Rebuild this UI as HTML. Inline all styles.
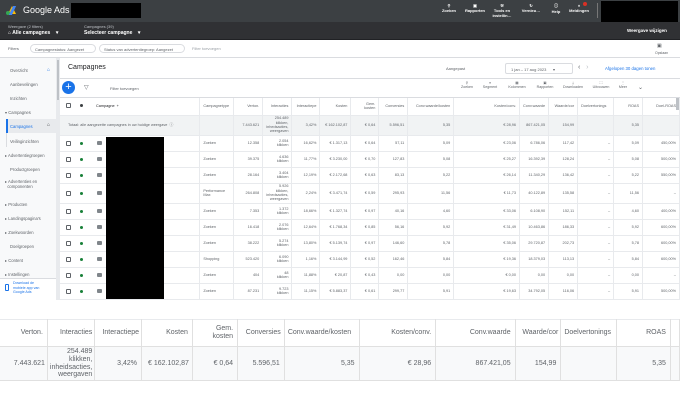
<!DOCTYPE html>
<html><head><meta charset="utf-8"><style>
*{margin:0;padding:0;box-sizing:border-box}
body{width:680px;height:409px;overflow:hidden;background:#fff;font-family:"Liberation Sans",sans-serif;color:#3c4043;position:relative}
.a{position:absolute}
.top{left:0;top:0;width:680px;height:22px;background:#3c4043}
.bar2{left:0;top:22px;width:680px;height:18px;background:#303134;border-bottom:1px solid #202124}
.w{color:#fff}
.ic{font-size:4px;color:#fff;text-align:center;font-weight:bold}
.side{left:0;top:58px;width:56px;height:242px;background:#f8f9fa}
.si{position:absolute;left:10px;font-size:4.2px;color:#5f6368}
table.m{position:absolute;left:60px;top:98px;border-collapse:collapse;table-layout:fixed;font-size:3.8px;color:#5f6368}
table.m td{border-right:1px solid #e8eaed;border-bottom:1px solid #e8eaed;text-align:right;padding:0 3px;line-height:4.3px;overflow:hidden;white-space:nowrap}
table.m td.l{text-align:left}
table.m tr{height:16px}
table.b{position:absolute;left:0;top:319px;border-collapse:collapse;table-layout:fixed;font-size:7px;color:#5f6368}
table.b td{border-right:1px solid #e0e0e0;border-bottom:1px solid #e0e0e0;border-top:1px solid #e8eaed;text-align:right;padding:0 4px;line-height:7.6px;white-space:nowrap;overflow:hidden}
.cb{position:absolute;width:5px;height:5px;border:1px solid #5f6368;border-radius:1px}
.dot{position:absolute;width:3px;height:3px;border-radius:50%;background:#188038}
.cic{position:absolute;width:5px;height:4px;background:#80868b;border-radius:1px}
</style></head><body>
<div class="a top"></div>
<div class="a" style="left:8px;top:6px;width:0;height:0;border-left:4px solid transparent;border-right:4px solid transparent;border-bottom:8px solid #fbbc04"></div>
<div class="a" style="left:6px;top:11px;width:4px;height:4px;border-radius:50%;background:#34a853"></div>
<div class="a" style="left:11px;top:6px;width:3px;height:9px;background:#4285f4;transform:skewX(-25deg)"></div>
<div class="a w" style="left:23px;top:5px;font-size:9px">Google Ads</div>
<div class="a" style="left:71px;top:3px;width:70px;height:15px;background:#000"></div>
<div class="a ic" style="left:437px;top:3px;width:24px">&#9906;<br>Zoeken</div>
<div class="a ic" style="left:461px;top:3px;width:28px">&#9635;<br>Rapporten</div>
<div class="a ic" style="left:490px;top:3px;width:24px">&#9874;<br>Tools en<br>instellin…</div>
<div class="a ic" style="left:518px;top:3px;width:26px">&#8635;<br>Vernieu…</div>
<div class="a ic" style="left:546px;top:3px;width:20px">&#9432;<br>Help</div>
<div class="a ic" style="left:566px;top:3px;width:26px">&#9830;<br>Meldingen</div>
<div class="a" style="left:583px;top:2px;width:4px;height:4px;border-radius:50%;background:#d93025"></div>
<div class="a" style="left:597px;top:3px;width:1px;height:15px;background:#777"></div>
<div class="a" style="left:601px;top:1px;width:77px;height:21px;background:#000"></div>
<div class="a bar2"></div>
<div class="a" style="left:8px;top:24px;font-size:4px;color:#bdc1c6">Weergave (2 filters)</div>
<div class="a w" style="left:8px;top:30px;font-size:5px;font-weight:bold">&#8962; Alle campagnes &nbsp;&nbsp; ▾</div>
<div class="a" style="left:84px;top:24px;font-size:4px;color:#bdc1c6">Campagnes (39)</div>
<div class="a w" style="left:84px;top:30px;font-size:5px;font-weight:bold">Selecteer campagne &nbsp;&nbsp; ▾</div>
<div class="a w" style="left:627px;top:28px;font-size:4.5px;font-weight:bold">Weergave wijzigen</div>
<div class="a" style="left:0;top:40px;width:680px;height:18px;border-bottom:1px solid #dadce0"></div>
<div class="a" style="left:8px;top:46px;font-size:4px;color:#5f6368">Filters</div>
<div class="a" style="left:30px;top:44px;width:66px;height:9px;border:1px solid #dadce0;border-radius:5px;font-size:4px;padding:2px 4px;color:#5f6368">Campagnestatus: Aangezet</div>
<div class="a" style="left:99px;top:44px;width:86px;height:9px;border:1px solid #dadce0;border-radius:5px;font-size:4px;padding:2px 4px;color:#5f6368">Status van advertentiegroep: Aangezet</div>
<div class="a" style="left:192px;top:46px;font-size:4px;color:#9aa0a6">Filter toevoegen</div>
<div class="a" style="left:657px;top:43px;font-size:5px;color:#5f6368">&#9635;</div>
<div class="a" style="left:655px;top:51px;font-size:3.5px;color:#5f6368">Opslaan</div>
<div class="a side"></div>
<div class="a" style="left:56px;top:58px;width:4px;height:242px;background:#e8eaed"></div>
<div class="a" style="left:57px;top:60px;width:2px;height:40px;background:#bdc1c6"></div>
<div class="si" style="top:68px">Overzicht</div><div class="a" style="left:47px;top:67px;font-size:5px;color:#1a73e8">&#8962;</div>
<div class="si" style="top:82px">Aanbevelingen</div>
<div class="si" style="top:96px">Inzichten</div>
<div class="si" style="top:110px;left:5px">▾ Campagnes</div>
<div class="a" style="left:6px;top:119px;width:50px;height:14px;background:#e8eaed"></div>
<div class="a" style="left:6px;top:119px;width:2px;height:14px;background:#1a73e8"></div>
<div class="si" style="top:124px;color:#1a73e8">Campagnes</div><div class="a" style="left:47px;top:122px;font-size:5px">&#8962;</div>
<div class="a" style="left:6px;top:133px;width:1px;height:14px;background:#dadce0"></div>
<div class="si" style="top:139px">Veilinginzichten</div>
<div class="si" style="top:153px;left:5px">▸ Advertentiegroepen</div>
<div class="si" style="top:167px">Productgroepen</div>
<div class="si" style="top:179px;left:5px;line-height:5px">▸ Advertenties en<br>&nbsp;&nbsp;componenten</div>
<div class="si" style="top:202px;left:5px">▸ Producten</div>
<div class="si" style="top:216px;left:5px">▸ Landingspagina's</div>
<div class="si" style="top:230px;left:5px">▸ Zoekwoorden</div>
<div class="si" style="top:244px">Doelgroepen</div>
<div class="si" style="top:258px;left:5px">▸ Content</div>
<div class="si" style="top:272px;left:5px">▸ Instellingen</div>
<div class="a" style="left:0;top:278px;width:56px;height:22px;background:#fff;border-top:1px solid #dadce0"></div>
<div class="a" style="left:5px;top:284px;width:4px;height:7px;border:1px solid #1a73e8;border-radius:1px"></div>
<div class="a" style="left:13px;top:281px;font-size:3.6px;color:#1a73e8;line-height:4.5px">Download de<br>mobiele app van<br>Google Ads</div>
<div class="a" style="left:68px;top:64px;font-size:7px;color:#202124">Campagnes</div>
<div class="a" style="left:60px;top:78px;width:620px;height:1px;background:#dadce0"></div>
<div class="a" style="left:446px;top:66px;font-size:4px;color:#5f6368">Aangepast</div>
<div class="a" style="left:505px;top:63px;width:68px;height:11px;border:1px solid #dadce0;border-radius:2px;font-size:4px;padding:3px 5px;color:#5f6368">1 jan – 17 aug 2023 &nbsp;&nbsp;&nbsp;&nbsp; ▾</div>
<div class="a" style="left:578px;top:64px;font-size:7px;color:#5f6368">‹ &nbsp; <span style="color:#bdc1c6">›</span></div>
<div class="a" style="left:605px;top:66px;font-size:4.3px;color:#1a73e8">Afgelopen 30 dagen tonen</div>
<div class="a" style="left:62px;top:81px;width:13px;height:13px;border-radius:50%;background:#1a73e8;color:#fff;font-size:11px;line-height:13px;text-align:center">+</div>
<div class="a" style="left:84px;top:84px;font-size:6px;color:#5f6368">&#9661;</div>
<div class="a" style="left:110px;top:86px;font-size:4px;color:#5f6368">Filter toevoegen</div>
<div class="a" style="left:460px;top:81px;font-size:3.6px;color:#5f6368;white-space:nowrap">
<span class="a" style="left:0;text-align:center;width:14px">&#9906;<br>Zoeken</span>
<span class="a" style="left:20px;text-align:center;width:20px">&#8801;<br>Segment</span>
<span class="a" style="left:45px;text-align:center;width:24px">&#9638;<br>Kolommen</span>
<span class="a" style="left:73px;text-align:center;width:24px">&#9635;<br>Rapporten</span>
<span class="a" style="left:100px;text-align:center;width:26px">&#10515;<br>Downloaden</span>
<span class="a" style="left:130px;text-align:center;width:22px">&#9974;<br>Uitvouwen</span>
<span class="a" style="left:157px;text-align:center;width:12px">&#8942;<br>Meer</span>
<span class="a" style="left:178px;top:3px;font-size:6px">⌄</span></div>
<div class="a" style="left:60px;top:97px;width:620px;height:1px;background:#dadce0"></div>
<table class="m">
<colgroup><col style="width:140px"><col style="width:34px"><col style="width:29px"><col style="width:29px"><col style="width:28px"><col style="width:31px"><col style="width:28px"><col style="width:29px"><col style="width:46px"><col style="width:66px"><col style="width:29px"><col style="width:29px"><col style="width:36px"><col style="width:29px"><col style="width:37px"></colgroup>
<tr style="height:17px"><td class="l" style="padding-left:36px;color:#202124">Campagne &nbsp;+</td><td class="l">Campagnetype</td><td>Verton.</td><td>Interacties</td><td>Interactiepe</td><td>Kosten</td><td>Gem.<br>kosten</td><td>Conversies</td><td>Conv.waarde/kosten</td><td>Kosten/conv.</td><td>Conv.waarde</td><td>Waarde/cor</td><td class="l">Doelvertonings</td><td>ROAS</td><td>Doel-ROAS</td></tr>
<tr style="height:20px;background:#f1f3f4"><td class="l" style="padding-left:8px">Totaal: alle aangezette campagnes in uw huidige weergave &nbsp;ⓘ</td><td></td><td>7.443.621</td><td>254.489<br>klikken,<br>inhedsacties,<br>weergaven</td><td>3,42%</td><td>€ 162.102,87</td><td>€ 0,64</td><td>5.596,51</td><td>5,35</td><td>€ 28,96</td><td>867.421,05</td><td>154,99</td><td></td><td>5,35</td><td></td></tr>
<tr><td></td><td class="l">Zoeken</td><td>12.358</td><td>2.054<br>klikken</td><td>16,62%</td><td>€ 1.317,13</td><td>€ 0,64</td><td>57,11</td><td>5,09</td><td>€ 23,06</td><td>6.786,06</td><td>117,42</td><td>–</td><td>5,09</td><td>450,00%</td></tr>
<tr><td></td><td class="l">Zoeken</td><td>39.375</td><td>4.636<br>klikken</td><td>11,77%</td><td>€ 3.230,00</td><td>€ 0,70</td><td>127,83</td><td>5,08</td><td>€ 25,27</td><td>16.392,39</td><td>128,24</td><td>–</td><td>5,08</td><td>500,00%</td></tr>
<tr><td></td><td class="l">Zoeken</td><td>28.164</td><td>3.404<br>klikken</td><td>12,19%</td><td>€ 2.172,68</td><td>€ 0,63</td><td>83,13</td><td>5,22</td><td>€ 26,14</td><td>11.340,29</td><td>136,42</td><td>–</td><td>5,22</td><td>550,00%</td></tr>
<tr style="height:20px"><td></td><td class="l">Performance<br>Max</td><td>264.808</td><td>5.926<br>klikken,<br>inhedsacties,<br>weergaven</td><td>2,24%</td><td>€ 3.471,74</td><td>€ 0,59</td><td>295,93</td><td>11,56</td><td>€ 11,73</td><td>40.122,89</td><td>135,58</td><td>–</td><td>11,56</td><td>–</td></tr>
<tr><td></td><td class="l">Zoeken</td><td>7.353</td><td>1.372<br>klikken</td><td>18,66%</td><td>€ 1.327,74</td><td>€ 0,97</td><td>40,16</td><td>4,60</td><td>€ 33,06</td><td>6.108,90</td><td>152,11</td><td>–</td><td>4,60</td><td>400,00%</td></tr>
<tr><td></td><td class="l">Zoeken</td><td>16.418</td><td>2.076<br>klikken</td><td>12,64%</td><td>€ 1.768,34</td><td>€ 0,85</td><td>56,16</td><td>5,92</td><td>€ 31,49</td><td>10.463,86</td><td>186,33</td><td>–</td><td>5,92</td><td>600,00%</td></tr>
<tr><td></td><td class="l">Zoeken</td><td>38.222</td><td>5.274<br>klikken</td><td>13,80%</td><td>€ 5.139,74</td><td>€ 0,97</td><td>146,60</td><td>5,78</td><td>€ 35,06</td><td>29.720,87</td><td>202,73</td><td>–</td><td>5,78</td><td>600,00%</td></tr>
<tr><td></td><td class="l">Shopping</td><td>523.420</td><td>6.090<br>klikken</td><td>1,16%</td><td>€ 3.144,99</td><td>€ 0,52</td><td>162,46</td><td>5,84</td><td>€ 19,36</td><td>18.379,03</td><td>113,13</td><td>–</td><td>5,84</td><td>600,00%</td></tr>
<tr><td></td><td class="l">Zoeken</td><td>404</td><td>48<br>klikken</td><td>11,88%</td><td>€ 20,87</td><td>€ 0,43</td><td>0,00</td><td>0,00</td><td>€ 0,00</td><td>0,00</td><td>0,00</td><td>–</td><td>0,00</td><td>–</td></tr>
<tr><td></td><td class="l">Zoeken</td><td>87.231</td><td>9.723<br>klikken</td><td>11,15%</td><td>€ 5.883,37</td><td>€ 0,61</td><td>299,77</td><td>5,91</td><td>€ 19,63</td><td>34.792,05</td><td>116,06</td><td>–</td><td>5,91</td><td>500,00%</td></tr>
</table>
<div class="cb" style="left:66px;top:103px"></div><div class="dot" style="left:80px;top:104px;background:#3c4043"></div>
<div class="cb" style="left:66px;top:141px"></div><div class="dot" style="left:80px;top:142px"></div><div class="cic" style="left:97px;top:141px"></div>
<div class="cb" style="left:66px;top:157px"></div><div class="dot" style="left:80px;top:158px"></div><div class="cic" style="left:97px;top:157px"></div>
<div class="cb" style="left:66px;top:173px"></div><div class="dot" style="left:80px;top:174px"></div><div class="cic" style="left:97px;top:173px"></div>
<div class="cb" style="left:66px;top:191px"></div><div class="dot" style="left:80px;top:192px"></div><div class="cic" style="left:97px;top:191px"></div>
<div class="cb" style="left:66px;top:209px"></div><div class="dot" style="left:80px;top:210px"></div><div class="cic" style="left:97px;top:209px"></div>
<div class="cb" style="left:66px;top:225px"></div><div class="dot" style="left:80px;top:226px"></div><div class="cic" style="left:97px;top:225px"></div>
<div class="cb" style="left:66px;top:241px"></div><div class="dot" style="left:80px;top:242px"></div><div class="cic" style="left:97px;top:241px"></div>
<div class="cb" style="left:66px;top:257px"></div><div class="dot" style="left:80px;top:258px"></div><div class="cic" style="left:97px;top:257px"></div>
<div class="cb" style="left:66px;top:273px"></div><div class="dot" style="left:80px;top:274px"></div><div class="cic" style="left:97px;top:273px"></div>
<div class="cb" style="left:66px;top:289px"></div><div class="dot" style="left:80px;top:290px"></div><div class="cic" style="left:97px;top:289px"></div>
<div class="a" style="left:106px;top:137px;width:58px;height:162px;background:#000"></div>
<div class="a" style="left:676px;top:98px;width:3px;height:12px;background:#bdc1c6"></div>
<table class="b">
<colgroup><col style="width:48px"><col style="width:45px"><col style="width:47px"><col style="width:51px"><col style="width:46px"><col style="width:47px"><col style="width:75px"><col style="width:78px"><col style="width:81px"><col style="width:46px"><col style="width:56px"><col style="width:55px"><col style="width:5px"></colgroup>
<tr style="height:27px"><td>Verton.</td><td style="padding:0 2px">Interacties</td><td style="padding:0 2px">Interactiepe</td><td>Kosten</td><td>Gem.<br>kosten</td><td style="padding:0 3px">Conversies</td><td style="text-align:left;padding:0 3px">Conv.waarde/kosten</td><td>Kosten/conv.</td><td>Conv.waarde</td><td style="padding:0 2px">Waarde/cor</td><td style="text-align:left;padding:0 3px">Doelvertonings</td><td>ROAS</td><td></td></tr>
<tr style="height:34px;background:#f8f9fa"><td style="padding:0 2px">7.443.621</td><td style="padding:0 2px">254.489<br>klikken,<br>inheidsacties,<br>weergaven</td><td>3,42%</td><td style="padding:0 3px">€ 162.102,87</td><td>€ 0,64</td><td>5.596,51</td><td>5,35</td><td>€ 28,96</td><td>867.421,05</td><td>154,99</td><td></td><td>5,35</td><td></td></tr>
</table>
</body></html>
